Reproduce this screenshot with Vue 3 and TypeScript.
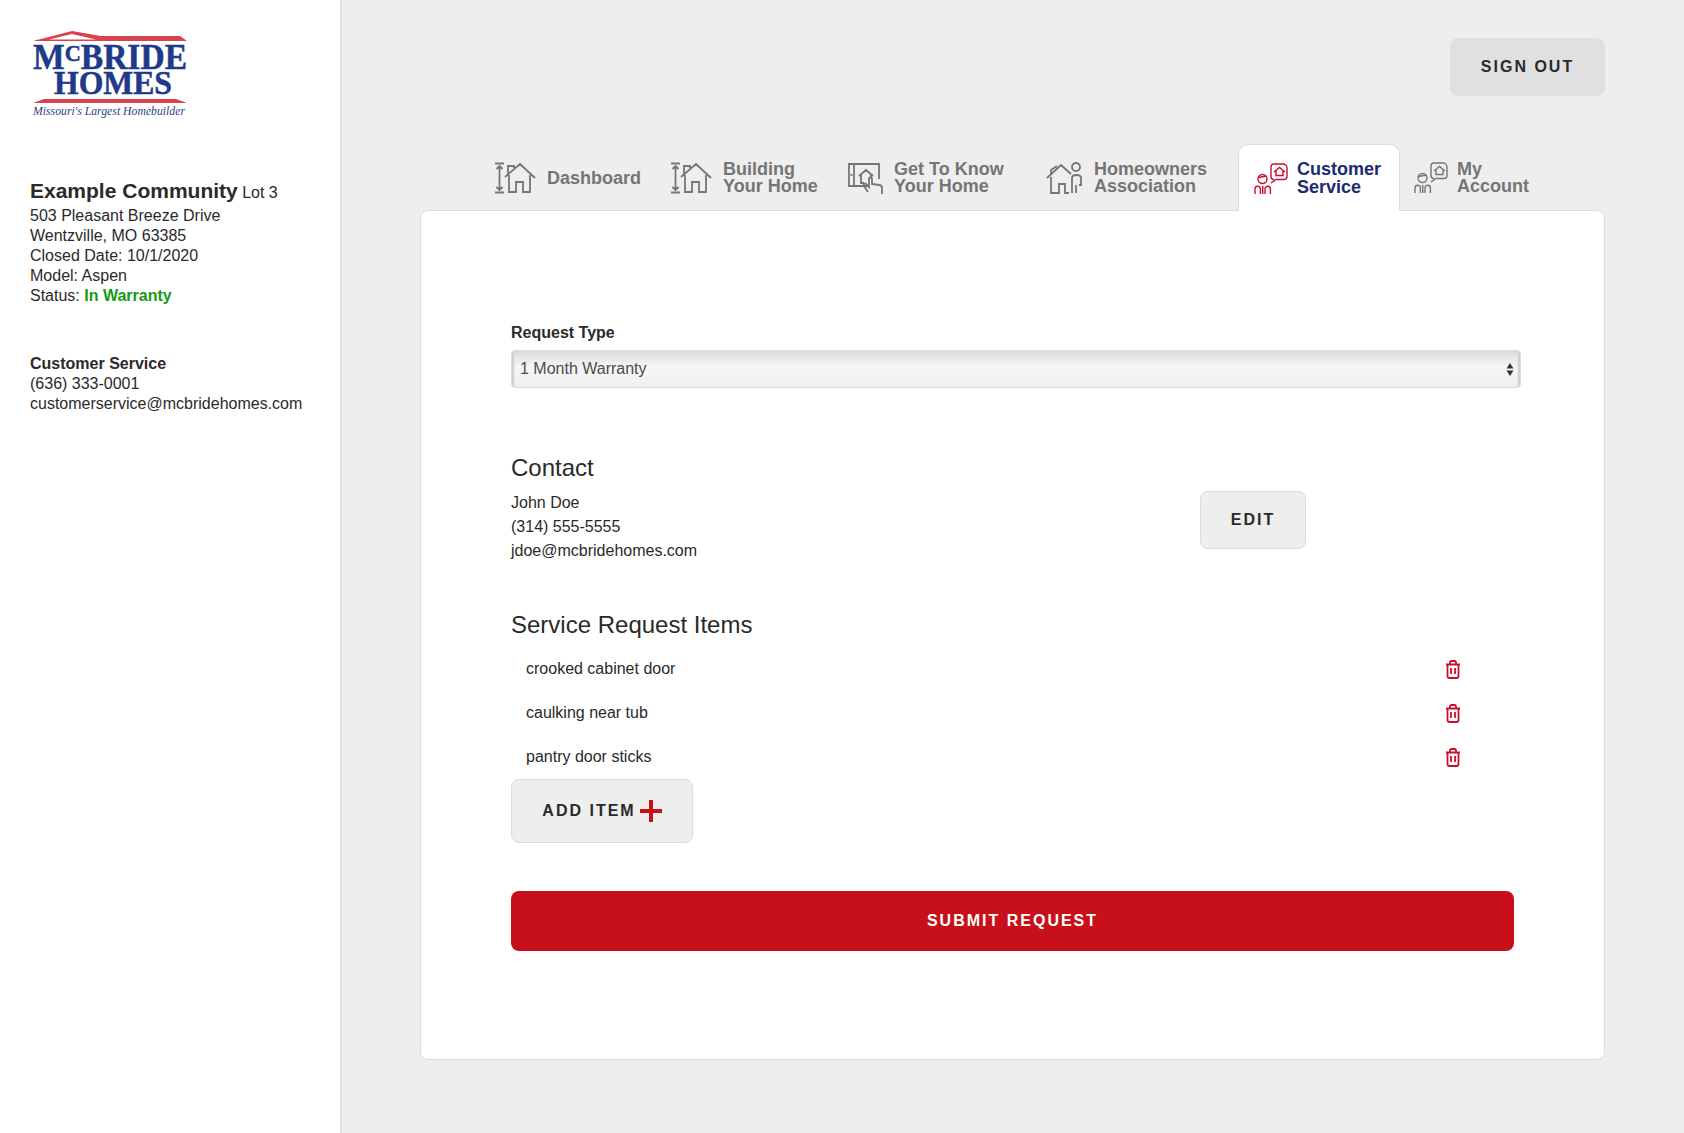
<script setup lang="ts">
const info: string[] = ['503 Pleasant Breeze Drive', 'Wentzville, MO 63385', 'Closed Date: 10/1/2020', 'Model: Aspen']
const contact: string[] = ['John Doe', '(314) 555-5555', 'jdoe@mcbridehomes.com']
const items: string[] = ['crooked cabinet door', 'caulking near tub', 'pantry door sticks']
</script>

<template>
  <div class="page">
    <aside class="side">
      <svg class="logo" width="160" height="94" viewBox="0 0 160 94">
        <path d="M3 13 L42 3 L71 8 L150 8 L157 13 Z" fill="#d9434e" />
        <path d="M19 11.500 L42 6 L66 11.500 Z" fill="#fff" />
        <text x="3" y="41" class="lg" font-size="36" textLength="154" lengthAdjust="spacingAndGlyphs">M<tspan font-size="24" dy="-8">C</tspan><tspan dy="8">BRIDE</tspan></text>
        <text x="24" y="66" class="lg" font-size="33" textLength="118" lengthAdjust="spacingAndGlyphs">HOMES</text>
        <path d="M3 75 L14 71 L146 71 L157 75 Z" fill="#d9434e" />
        <text x="3" y="87" class="tag" font-size="12.500" textLength="152" lengthAdjust="spacingAndGlyphs">Missouri's Largest Homebuilder</text>
      </svg>
      <div class="comm"><b>Example Community</b> <span>Lot 3</span></div>
      <div v-for="l in info" :key="l" class="ln">{{ l }}</div>
      <div class="ln">Status: <b class="ok">In Warranty</b></div>
      <div class="ln cs"><b>Customer Service</b></div>
      <div class="ln">(636) 333-0001</div>
      <div class="ln">customerservice@mcbridehomes.com</div>
    </aside>

    <main class="main">
      <div class="top"><button class="btn signout">SIGN OUT</button></div>

      <nav class="tabs">
        <a class="tab t1">
          <svg width="42" height="32" viewBox="0 0 42 32" class="ic">
            <path d="M1 1.500h9M1 30.500h9M5.500 4v24M2.500 7l3-3 3 3M2.500 25l3 3 3-3M11 15L26 2l15 14M14 12V4h6v2M15 13v17h7V20h7v10h7V13" />
          </svg>
          <span>Dashboard</span>
        </a>
        <a class="tab t2">
          <svg width="42" height="32" viewBox="0 0 42 32" class="ic">
            <path d="M1 1.500h9M1 30.500h9M5.500 4v24M2.500 7l3-3 3 3M2.500 25l3 3 3-3M11 15L26 2l15 14M14 12V4h6v2M15 13v17h7V20h7v10h7V13" />
          </svg>
          <span>Building<br />Your Home</span>
        </a>
        <a class="tab t3">
          <svg width="36" height="31" viewBox="0 0 36 31" class="ic">
            <path d="M20 23H1V1h30v15M6 1v22M3.500 11v2M11 13l7-6 7 6M13 12v8h3M23 12v3M20 29l-4-6c-1-2 1-3 2-2l3 3v-8c0-2 3-2 3 0v5l7 1c2 0 3 1 3 3v7" />
          </svg>
          <span>Get To Know<br />Your Home</span>
        </a>
        <a class="tab t4">
          <svg width="39" height="32" viewBox="0 0 39 32" class="ic">
            <path d="M1 16L15 3l10 9M5 12V8l6-4M5 15v16h8V22h6v9h4M26 5a4 4 0 1 0 8 0a4 4 0 1 0-8 0M26 31V16c0-4 9-4 9 0v7h-2M30 23v8" />
          </svg>
          <span>Homeowners<br />Association</span>
        </a>
        <a class="tab t5 active">
          <svg width="35" height="32" viewBox="0 0 35 32" class="ic thin">
            <circle cx="8.500" cy="16" r="4.500" />
            <path d="M4.500 14.500l8-1.500M1 31v-5a2.700 2.700 0 0 1 5.400 0v5M8.700 23v8M11 31v-5a2.700 2.700 0 0 1 5.400 0v5M17 20l5-3.500h8a3 3 0 0 0 3-3V5a4 4 0 0 0-4-4h-9a3 3 0 0 0-3 3v9.500a3 3 0 0 0 3 3M20 9l5.500-4.500L31 9M22 7.500V12.500h7V7.500" />
          </svg>
          <span>Customer<br />Service</span>
        </a>
        <a class="tab t6">
          <svg width="35" height="32" viewBox="0 0 35 32" class="ic thin">
            <circle cx="8.500" cy="16" r="4.500" />
            <path d="M4.500 14.500l8-1.500M1 31v-5a2.700 2.700 0 0 1 5.400 0v5M8.700 23v8M11 31v-5a2.700 2.700 0 0 1 5.400 0v5M17 20l5-3.500h8a3 3 0 0 0 3-3V5a4 4 0 0 0-4-4h-9a3 3 0 0 0-3 3v9.500a3 3 0 0 0 3 3M20 9l5.500-4.500L31 9M22 7.500V12.500h7V7.500" />
          </svg>
          <span>My<br />Account</span>
        </a>
      </nav>

      <section class="card">
        <label class="lbl">Request Type</label>
        <div class="sel">
          <span>1 Month Warranty</span>
          <svg width="8" height="15" viewBox="0 0 8 15"><path d="M4 1l3.500 5.500h-7zM4 14l3.500-5.500h-7z" fill="#333" /></svg>
        </div>

        <div class="contact">
          <div class="cinfo">
            <h2>Contact</h2>
            <div v-for="c in contact" :key="c" class="cl">{{ c }}</div>
          </div>
          <button class="btn edit">EDIT</button>
        </div>

        <h2 class="sri">Service Request Items</h2>
        <div v-for="i in items" :key="i" class="item">
          <span>{{ i }}</span>
          <svg width="16" height="19" viewBox="0 0 16 19" class="tr">
            <path d="M1 4.500h14M5 4.500V2.500a1.500 1.500 0 0 1 1.500-1.500h3A1.500 1.500 0 0 1 11 2.500v2M2.500 4.500v11.500a2 2 0 0 0 2 2h7a2 2 0 0 0 2-2V4.500M6 8v6M10 8v6" />
          </svg>
        </div>
        <button class="btn add">ADD ITEM<span class="plus"></span></button>
        <button class="submit">SUBMIT REQUEST</button>
      </section>
    </main>
  </div>
</template>

<style>
html, body { margin: 0; background: #eee; }
</style>

<style scoped>
.page { display: flex; height: 1133px; overflow: hidden; font-family: "Liberation Sans", Arial, sans-serif; color: #2a2a2a; background: #eeeeee; }
.side { width: 342px; box-sizing: border-box; flex: none; background: #fff; border-right: 2px solid #e2e2e2; padding: 28px 0 0 30px; font-size: 16px; }
.logo { display: block; overflow: visible; }
.lg { font-family: "Liberation Serif", serif; font-weight: 700; fill: #1f3a8a; stroke: #1f3a8a; stroke-width: 0.500; }
.tag { font-family: "Liberation Serif", serif; font-style: italic; fill: #2a3f86; }
.comm { margin-top: 55px; line-height: 27px; }
.comm b { font-size: 21px; }
.ln { line-height: 20px; }
.ok { color: #139a17; }
.cs { margin-top: 48px; }
.main { flex: 1; min-width: 0; padding: 38px 79px 0 78px; }
.top { display: flex; justify-content: flex-end; height: 58px; }
.btn { font-family: inherit; font-weight: 700; letter-spacing: 2px; color: #2a2a2a; border-radius: 8px; background: #eeeeee; border: 1px solid #dcdcdc; font-size: 16px; }
.signout { width: 155px; height: 58px; background: #e0e0e0; border-color: #e0e0e0; }
.tabs { display: flex; height: 66px; margin-top: 48px; font-size: 18px; font-weight: 700; line-height: 17.500px; color: #757575; position: relative; z-index: 1; }
.tab { display: flex; align-items: center; box-sizing: border-box; height: 67px; padding-top: 1px; }
.tab span { display: block; }
.ic { flex: none; fill: none; stroke: currentColor; stroke-width: 1.800; margin-right: 11px; }
.thin { stroke-width: 1.400; }
.t1 { margin-left: 74px; width: 176px; }
.t1 span { padding-top: 2px; }
.t2 { width: 178px; }
.t3 { width: 198px; }
.t3 .ic { margin-right: 10px; }
.t4 { width: 192px; }
.t4 .ic { margin-right: 9px; }
.t5 { width: 162px; padding-left: 15px; background: #fff; color: #1c2a6e; border: 1px solid #dddddd; border-bottom: 0; border-radius: 10px 10px 0 0; }
.t5 .ic { color: #c8102e; margin-right: 8px; }
.t6 { padding-left: 14px; }
.t6 .ic { margin-right: 8px; }
.card { box-sizing: border-box; height: 850px; background: #fff; border: 1px solid #dddddd; border-radius: 8px; padding: 112px 78px 0 90px; font-size: 16px; }
.lbl { display: block; font-weight: 700; line-height: 20px; margin-bottom: 7px; }
.sel { display: flex; justify-content: space-between; align-items: center; height: 38px; box-sizing: border-box; padding: 0 6px 0 8px; width: 1010px; color: #4a4a4a; border: 1px solid #ddd; border-radius: 4px; background: linear-gradient(#dcdcdc, #f6f6f6 45%, #f0f0f0); box-shadow: inset 3px 0 2px -1px #ccc, inset -3px 0 2px -1px #ccc; }
.contact { display: flex; margin-top: 64px; }
.cinfo { width: 689px; }
h2 { margin: 0; font-weight: 400; font-size: 24px; line-height: 32px; }
.cinfo h2 { margin-bottom: 7px; }
.cl { line-height: 24px; }
.edit { width: 106px; height: 58px; margin-top: 39px; }
.sri { margin-top: 46px; margin-bottom: 6px; }
.item { display: flex; justify-content: space-between; align-items: center; height: 44px; padding: 0 65px 0 15px; }
.tr { fill: none; stroke: #c8102e; stroke-width: 1.800; }
.add { display: flex; align-items: center; justify-content: center; width: 182px; height: 64px; padding: 0; }
.plus { width: 22px; height: 22px; margin-left: 4px; background: linear-gradient(#c8101a, #c8101a) center / 22px 4px no-repeat, linear-gradient(#c8101a, #c8101a) center / 4px 22px no-repeat; }
.submit { display: block; width: 1003px; height: 60px; margin-top: 48px; background: #c8101a; color: #fff; border: 0; border-radius: 8px; font-family: inherit; font-size: 16px; font-weight: 700; letter-spacing: 2px; }
</style>
